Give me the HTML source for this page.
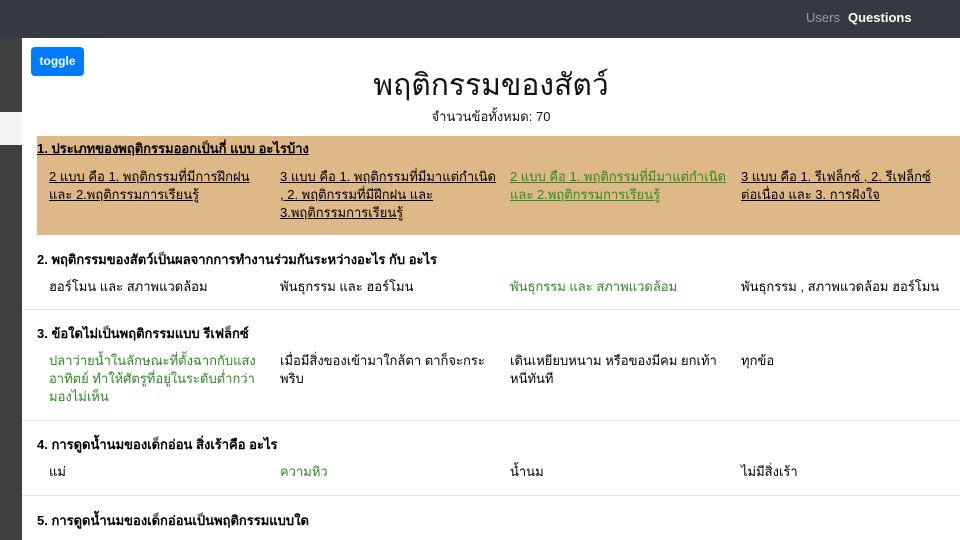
<!DOCTYPE html>
<html><head><meta charset="utf-8"><style>
body{margin:0;width:960px;height:540px;overflow:hidden;font-family:"Liberation Sans","DejaVu Sans",sans-serif;background:#fff;position:relative}
.nav{position:absolute;left:0;top:0;width:960px;height:38px;background:#343a40}
.nav span{position:absolute;top:10px;font-size:13px}
.side{position:absolute;left:0;top:38px;width:22px;height:502px;background:#3f3f3f}
.band{position:absolute;left:0;top:112px;width:22px;height:33px;background:#f4f4f4}
.btn{position:absolute;left:31px;top:47px;width:53px;height:29px;background:#007bff;border-radius:4px;color:#fff;font-size:12px;font-weight:bold;text-align:center;line-height:29px}
h1{position:absolute;left:22px;width:938px;top:62px;margin:0;text-align:center;font-size:30px;font-weight:normal;color:#111}
.cnt{position:absolute;left:22px;width:938px;top:106px;text-align:center;font-size:13px;color:#111}
.q{position:absolute;left:37px;width:923px;font-size:13px;color:#000}
.q .t{position:absolute;left:0;top:0;font-weight:bold}
.q .a{position:absolute;width:218px;line-height:18px}
.hl{background:#deb887}
.u{text-decoration:underline}
.g{color:#2e8b22}
.sep{position:absolute;left:22px;width:938px;height:1px;background:#e2e2e2}
</style></head><body>
<div class="nav"><span style="left:806px;color:#9a9da0">Users</span><span style="left:848px;color:#fff;font-weight:bold">Questions</span></div>
<div class="side"></div><div class="band"></div>
<div class="btn">toggle</div>
<h1>พฤติกรรมของสัตว์</h1>
<div class="cnt">จำนวนข้อทั้งหมด: 70</div>

<div class="q hl" style="top:136px;height:99px">
<div class="t u" style="top:2px">1. ประเภทของพฤติกรรมออกเป็นกี่ แบบ อะไรบ้าง</div>
<div class="a u" style="left:12px;top:32px">2 แบบ คือ 1. พฤติกรรมที่มีการฝึกฝน และ 2.พฤติกรรมการเรียนรู้</div>
<div class="a u" style="left:243px;top:32px">3 แบบ คือ 1. พฤติกรรมที่มีมาแต่กำเนิด , 2. พฤติกรรมที่มีฝึกฝน และ 3.พฤติกรรมการเรียนรู้</div>
<div class="a u g" style="left:473px;top:32px">2 แบบ คือ 1. พฤติกรรมที่มีมาแต่กำเนิด และ 2.พฤติกรรมการเรียนรู้</div>
<div class="a u" style="left:704px;top:32px;width:200px">3 แบบ คือ 1. รีเฟล็กซ์ , 2. รีเฟล็กซ์ต่อเนื่อง และ 3. การฝังใจ</div>
</div>

<div class="q" style="top:249px">
<div class="t">2. พฤติกรรมของสัตว์เป็นผลจากการทำงานร่วมกันระหว่างอะไร กับ อะไร</div>
<div class="a" style="left:12px;top:29px">ฮอร์โมน และ สภาพแวดล้อม</div>
<div class="a" style="left:243px;top:29px">พันธุกรรม และ ฮอร์โมน</div>
<div class="a g" style="left:473px;top:29px">พันธุกรรม และ สภาพแวดล้อม</div>
<div class="a" style="left:704px;top:29px;width:220px">พันธุกรรม , สภาพแวดล้อม ฮอร์โมน</div>
</div>
<div class="sep" style="top:309px"></div>

<div class="q" style="top:323px">
<div class="t">3. ข้อใดไม่เป็นพฤติกรรมแบบ รีเฟล็กซ์</div>
<div class="a g" style="left:12px;top:29px">ปลาว่ายน้ำในลักษณะที่ตั้งฉากกับแสงอาทิตย์ ทำให้ศัตรูที่อยู่ในระดับต่ำกว่ามองไม่เห็น</div>
<div class="a" style="left:243px;top:29px">เมื่อมีสิ่งของเข้ามาใกล้ตา ตาก็จะกระพริบ</div>
<div class="a" style="left:473px;top:29px">เดินเหยียบหนาม หรือของมีคม ยกเท้าหนีทันที</div>
<div class="a" style="left:704px;top:29px">ทุกข้อ</div>
</div>
<div class="sep" style="top:420px"></div>

<div class="q" style="top:434px">
<div class="t">4. การดูดน้ำนมของเด็กอ่อน สิ่งเร้าคือ อะไร</div>
<div class="a" style="left:12px;top:29px">แม่</div>
<div class="a g" style="left:243px;top:29px">ความหิว</div>
<div class="a" style="left:473px;top:29px">น้ำนม</div>
<div class="a" style="left:704px;top:29px">ไม่มีสิ่งเร้า</div>
</div>
<div class="sep" style="top:495px"></div>

<div class="q" style="top:510px">
<div class="t">5. การดูดน้ำนมของเด็กอ่อนเป็นพฤติกรรมแบบใด</div>
</div>
</body></html>
